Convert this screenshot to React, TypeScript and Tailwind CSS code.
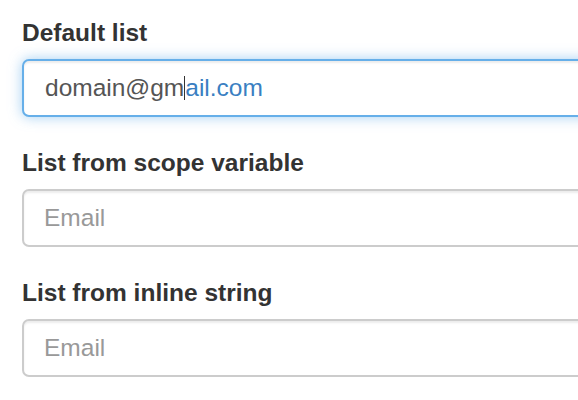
import * as React from "react";

// Bootstrap-3 style form, rendered at ~1.7x zoom.
const font = { fontFamily: '"Liberation Sans", Arial, Helvetica, sans-serif' };

function Label({ children }: { children: React.ReactNode }) {
  return (
    <label className="block mb-[9px] h-[34px] leading-[34px] text-[24.5px] font-bold text-[#333]">
      {children}
    </label>
  );
}

function EmailInput() {
  return (
    <input
      type="text"
      placeholder="Email"
      className="block w-[640px] h-[58px] px-[20px] text-[24.5px] leading-[34px] text-[#555] bg-white border-2 border-[#ccc] rounded-[7px] shadow-[inset_0_2px_2px_rgba(0,0,0,0.075)] outline-none placeholder:text-[#999]"
      style={font}
    />
  );
}

export default function App() {
  return (
    <div className="w-[578px] h-[400px] overflow-hidden bg-white" style={font}>
      <div className="pt-[16px] pl-[22px]">
        <div className="mb-[29px]">
          <Label>Default list</Label>
          <div className="flex items-center w-[640px] h-[58px] px-[21px] text-[24.5px] leading-[34px] bg-white border-2 border-[#66afe9] rounded-[7px] shadow-[inset_0_2px_2px_rgba(0,0,0,0.075),0_0_13px_rgba(102,175,233,0.6)]">
            <span className="text-[#555]">domain@gm</span>
            <span className="inline-block w-px h-[24px] bg-[#333]" />
            <span className="text-[#3a7fc2]">ail.com</span>
          </div>
        </div>
        <div className="mb-[29px]">
          <Label>List from scope variable</Label>
          <EmailInput />
        </div>
        <div>
          <Label>List from inline string</Label>
          <EmailInput />
        </div>
      </div>
    </div>
  );
}
